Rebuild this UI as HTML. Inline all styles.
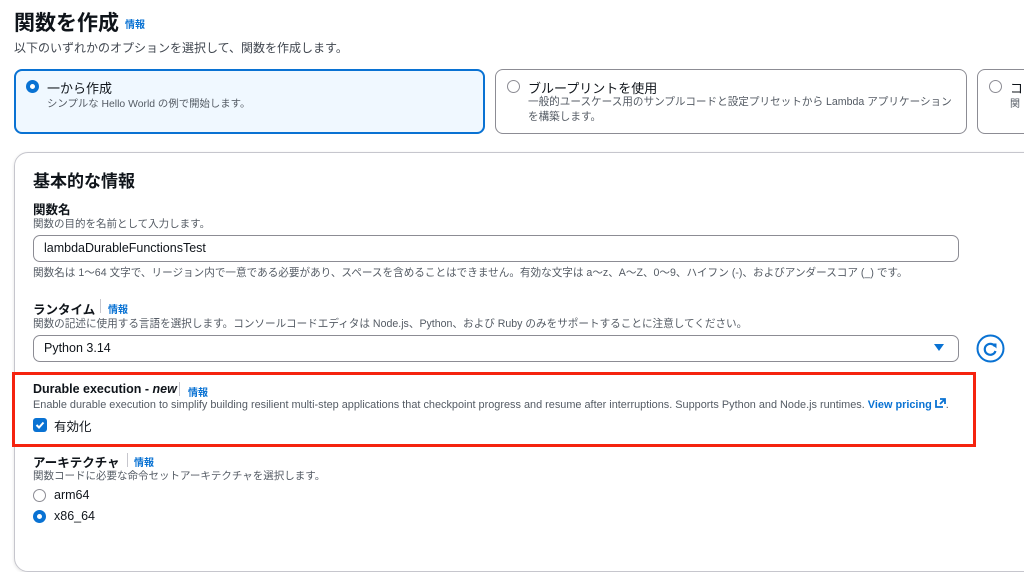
<!DOCTYPE html>
<html><head><meta charset="utf-8"><style>
*{box-sizing:border-box;margin:0;padding:0}
body{width:1024px;height:541px;overflow:hidden;background:#fff;font-family:"Liberation Sans","Noto Sans CJK JP",sans-serif;color:#0f141a;position:relative}
.a{position:absolute;white-space:nowrap}
.info{color:#0972d3;font-size:10px;font-weight:bold}
.g{color:#545b64;font-size:11px}
.b{font-weight:bold;font-size:12.5px}
.radio{position:absolute;width:13px;height:13px;border-radius:50%}
.on{border:4px solid #0972d3;background:#fff}
.off{border:1.5px solid #8c8c94;background:#fff}
</style></head><body>
<div class="a" style="left:14px;top:7px;font-size:21px;font-weight:bold">関数を作成</div>
<div class="a info" style="left:125px;top:16px">情報</div>
<div class="a" style="left:14px;top:39px;font-size:12px;color:#414750">以下のいずれかのオプションを選択して、関数を作成します。</div>

<div class="a" style="left:14px;top:69px;width:471px;height:65px;border:2px solid #0972d3;border-radius:8px;background:#f0f8ff"></div>
<div class="radio on" style="left:26px;top:80px"></div>
<div class="a" style="left:47px;top:78px;font-size:13px">一から作成</div>
<div class="a g" style="left:47px;top:95px;font-size:10.4px">シンプルな Hello World の例で開始します。</div>

<div class="a" style="left:495px;top:69px;width:472px;height:65px;border:1px solid #8c8c94;border-radius:8px"></div>
<div class="radio off" style="left:507px;top:80px"></div>
<div class="a" style="left:528px;top:78px;font-size:13px">ブループリントを使用</div>
<div class="a g" style="left:528px;top:95px;font-size:10.6px;line-height:15px">一般的ユースケース用のサンプルコードと設定プリセットから Lambda アプリケーション<br>を構築します。</div>

<div class="a" style="left:977px;top:69px;width:80px;height:65px;border:1px solid #8c8c94;border-radius:8px"></div>
<div class="radio off" style="left:989px;top:80px"></div>
<div class="a" style="left:1010px;top:78px;font-size:13px">コ</div>
<div class="a g" style="left:1010px;top:95px;font-size:10px">関</div>

<div class="a" style="left:14px;top:152px;width:1040px;height:420px;border:1px solid #c6c6cd;border-radius:14px;box-shadow:0 1px 3px rgba(0,0,0,.12)"></div>
<div class="a" style="left:33px;top:167px;font-size:17px;font-weight:bold">基本的な情報</div>

<div class="a b" style="left:33px;top:199px">関数名</div>
<div class="a g" style="left:33px;top:216px;font-size:10.5px">関数の目的を名前として入力します。</div>
<div class="a" style="left:33px;top:235px;width:926px;height:27px;border:1px solid #8c8c94;border-radius:7px;padding:5px 10px;font-size:12.5px">lambdaDurableFunctionsTest</div>
<div class="a g" style="left:33px;top:265px;font-size:10.6px">関数名は 1〜64 文字で、リージョン内で一意である必要があり、スペースを含めることはできません。有効な文字は a〜z、A〜Z、0〜9、ハイフン (-)、およびアンダースコア (_) です。</div>

<div class="a b" style="left:33px;top:299px">ランタイム</div>
<div class="a" style="left:100px;top:299px;width:1px;height:14px;background:#c6c6cd"></div>
<div class="a info" style="left:108px;top:301px">情報</div>
<div class="a g" style="left:33px;top:316px;font-size:10.6px">関数の記述に使用する言語を選択します。コンソールコードエディタは Node.js、Python、および Ruby のみをサポートすることに注意してください。</div>
<div class="a" style="left:33px;top:335px;width:926px;height:27px;border:1px solid #8c8c94;border-radius:7px;padding:5px 10px;font-size:12.5px">Python 3.14</div>
<svg class="a" style="left:934px;top:344px" width="10" height="8"><path d="M0 0H10L5 7Z" fill="#0972d3"/></svg>
<svg class="a" style="left:976px;top:334px" width="29" height="29" viewBox="0 0 29 29"><circle cx="14.5" cy="14.5" r="13" fill="none" stroke="#0972d3" stroke-width="2"/><path d="M19 12.5A5.5 5.5 0 1 0 19.5 17" fill="none" stroke="#0972d3" stroke-width="2.2"/><path d="M15.5 9.5H20.5V14.5Z" fill="#0972d3"/></svg>

<div class="a" style="left:12px;top:372px;width:964px;height:75px;border:3px solid #f5230f"></div>
<div class="a b" style="left:33px;top:382px">Durable execution - <i>new</i></div>
<div class="a" style="left:179px;top:382px;width:1px;height:14px;background:#c6c6cd"></div>
<div class="a info" style="left:188px;top:384px">情報</div>
<div class="a g" style="left:33px;top:398px;font-size:10.9px">Enable durable execution to simplify building resilient multi-step applications that checkpoint progress and resume after interruptions. Supports Python and Node.js runtimes. <span style="color:#0972d3;font-weight:bold">View pricing</span> <svg width="11" height="10" viewBox="0 0 11 10"><path d="M1 2V9H8M5 1H10V6M10 1L5 6" fill="none" stroke="#0972d3" stroke-width="1.8"/></svg>.</div>
<div class="a" style="left:33px;top:418px;width:14px;height:14px;background:#0972d3;border-radius:3px"></div>
<svg class="a" style="left:33px;top:418px" width="14" height="14"><path d="M3.5 7L6 9.5L10.5 4.5" fill="none" stroke="#fff" stroke-width="2"/></svg>
<div class="a" style="left:54px;top:416px;font-size:12.5px">有効化</div>

<div class="a b" style="left:33px;top:452px">アーキテクチャ</div>
<div class="a" style="left:127px;top:453px;width:1px;height:14px;background:#c6c6cd"></div>
<div class="a info" style="left:134px;top:454px">情報</div>
<div class="a g" style="left:33px;top:468px;font-size:10.5px">関数コードに必要な命令セットアーキテクチャを選択します。</div>
<div class="radio off" style="left:33px;top:489px"></div>
<div class="a" style="left:54px;top:488px;font-size:12.5px">arm64</div>
<div class="radio on" style="left:33px;top:510px"></div>
<div class="a" style="left:54px;top:509px;font-size:12.5px">x86_64</div>
</body></html>
